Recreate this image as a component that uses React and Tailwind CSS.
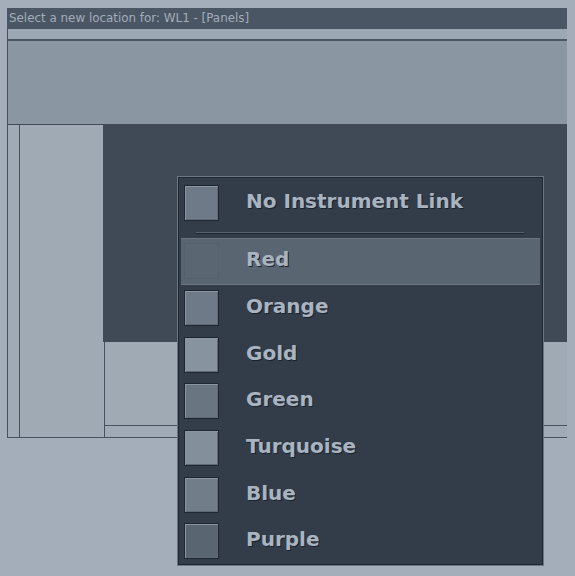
const items = [
  { label: 'Red', box: 'bg-[#5b6673]', active: true },
  { label: 'Orange', box: 'bg-[#6e7a88]' },
  { label: 'Gold', box: 'bg-[#8893a0]' },
  { label: 'Green', box: 'bg-[#6a7582]' },
  { label: 'Turquoise', box: 'bg-[#848f9c]' },
  { label: 'Blue', box: 'bg-[#727d8a]' },
  { label: 'Purple', box: 'bg-[#5a6572]' },
];

function Swatch({ className, faint }) {
  return (
    <div
      className={
        'w-[35px] h-[36px] shrink-0 border ' +
        (faint
          ? 'border-[#556070] shadow-none '
          : 'border-[#1e2731] shadow-[inset_1px_1px_0_#8a95a2,inset_-1px_-1px_0_#5f6a77] ') +
        className
      }
    />
  );
}

function Label({ children }) {
  return (
    <span className="ml-[27px] pb-[4px] text-[20px] font-bold leading-none text-[#a9b4c0] [text-shadow:1px_1px_0_#1a222b]">
      {children}
    </span>
  );
}

function Row({ label, box, active }) {
  return (
    <div
      className={
        'flex items-center h-[46.7px] ' +
        (active ? 'bg-[#5a6572] border-y border-[#6a7583] mx-[-3px] pl-[3px]' : '')
      }
    >
      <Swatch className={box} faint={active} />
      <Label>{label}</Label>
    </div>
  );
}

export default function App() {
  return (
    <div className="relative w-[575px] h-[576px] bg-[#a4aebb] pt-[8px] pl-[7px] font-['DejaVu_Sans',sans-serif] overflow-hidden">
      <div className="w-[560px]">
        <div className="h-[21px] bg-[#4a5664] flex items-center pt-[1px] px-[2px] text-[11.9px] text-[#a2adb9]">
          Select a new location for: WL1 - [Panels]
        </div>
        <div className="border-l border-[#46525f]">
          <div className="h-[10px] bg-[#9ca8b4]" />
          <div className="h-[2px] bg-[#4a5664]" />
          <div className="h-[83px] bg-[#8b96a3]" />
          <div className="h-[1px] bg-[#3f4a56]" />
          <div className="flex h-[313px] border-b border-[#46525f]">
            <div className="w-[12px] bg-[#a0aab5] border-r border-[#46525f]" />
            <div className="w-[83px] bg-[#a0aab5]" />
            <div className="flex-1 flex flex-col">
              <div className="h-[217px] bg-[#3f4a56]" />
              <div className="flex-1 flex flex-col border-l border-[#46525f] ml-[1px]">
                <div className="h-[84px] bg-[#a0aab5] border-b border-[#46525f]" />
                <div className="flex-1 bg-[#a0aab5]" />
              </div>
            </div>
          </div>
        </div>
      </div>

      <div className="absolute left-[177px] top-[176px] w-[367px] h-[390px] border border-[#6b7684]">
        <div className="h-full border border-[#1e2731] bg-[#323d49] px-[5px] pt-[5px]">
          <div className="flex items-center h-[39px]">
            <Swatch className="bg-[#6e7a88]" />
            <Label>No Instrument Link</Label>
          </div>
          <div className="ml-[12px] mr-[13px] mt-[10px] h-[2px] bg-[#56626f] border-b border-[#1f2832]" />
          <div className="mt-[4px]">
            {items.map((it) => (
              <Row key={it.label} {...it} />
            ))}
          </div>
        </div>
      </div>
    </div>
  );
}
